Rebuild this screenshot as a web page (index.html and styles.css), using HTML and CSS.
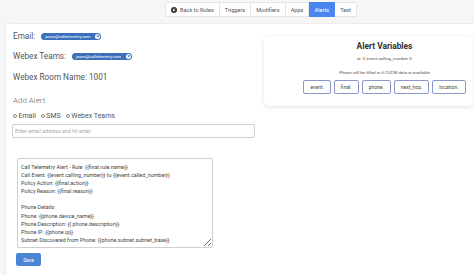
FILE: index.html
```html
<!DOCTYPE html>
<html>
<head>
<meta charset="utf-8">
<link rel="stylesheet" href="styles.css">
</head>
<body>
<nav class="tabs">
  <a class="tab first"><svg class="back-icon" viewBox="0 0 10 10"><circle cx="5" cy="5" r="5" fill="#333"/><path d="M5.6 2.6 L3.2 5 L5.6 7.4 M3.4 5 H7.2" stroke="#fff" stroke-width="1.5" fill="none"/></svg>Back to Rules</a>
  <a class="tab">Triggers</a>
  <a class="tab">Modifiers</a>
  <a class="tab">Apps</a>
  <a class="tab active">Alerts</a>
  <a class="tab last">Test</a>
</nav>
<main class="main">
  <section class="left">
    <div class="field">Email: <span class="badge">jason@calltelemetry.com<span class="badge-x">×</span></span></div>
    <div class="field f2">Webex Teams: <span class="badge">jason@calltelemetry.com<span class="badge-x">×</span></span></div>
    <div class="field f3">Webex Room Name: 1001</div>
    <h3 class="add-title">Add Alert</h3>
    <div class="radios">
      <label class="radio"><input type="radio" name="t">Email</label>
      <label class="radio"><input type="radio" name="t">SMS</label>
      <label class="radio"><input type="radio" name="t">Webex Teams</label>
    </div>
    <input class="email-input" type="text" placeholder="Enter email address and hit enter">
    <textarea class="message">Call Telemetry Alert - Rule: {{final.rule.name}}
Call Event: {{event.calling_number}} to {{event.called_number}}
Policy Action: {{final.action}}
Policy Reason: {{final.reason}}

Phone Details:
Phone: {{phone.device_name}}
Phone Description: {{ phone.description}}
Phone IP: {{phone.ip}}
Subnet Discovered from Phone: {{phone.subnet.subnet_base}}</textarea>
    <button class="save">Save</button>
  </section>
  <aside class="vars">
    <h2 class="vars-title">Alert Variables</h2>
    <p class="vars-note">ie: {{ event.calling_number }}</p>
    <p class="vars-note n2">Phone will be filled in if CUCM data is available</p>
    <div class="var-buttons">
      <button class="var">event.</button>
      <button class="var">final.</button>
      <button class="var">phone.</button>
      <button class="var">next_hop.</button>
      <button class="var">location.</button>
    </div>
  </aside>
</main>
</body>
</html>
```
FILE: styles.css
```css
html, body {
  margin: 0;
  padding: 0;
  height: 100%;
}
body {
  background: #f6f6f6;
  font-family: Roboto, "Liberation Sans", sans-serif;
  color: #444;
  overflow: hidden;
}
.tabs {
  display: flex;
  margin-left: 165px;
  padding-top: 2px;
  height: 23px;
  box-sizing: border-box;
}
.tab {
  display: flex;
  align-items: center;
  height: 15px;
  box-sizing: border-box;
  padding: 0 5px;
  background: #fff;
  border: 1px solid #e4e4e4;
  border-left: none;
  font-size: 5.6px;
  color: #555;
  white-space: nowrap;
}
.tab.first {
  border-left: 1px solid #e4e4e4;
  border-radius: 2px 0 0 2px;
  padding-left: 5px;
}
.tab.last { border-radius: 0 2px 2px 0; }
.tab.active {
  background: #4a86ee;
  border-color: #4a86ee;
  color: #fff;
}
.back-icon {
  width: 6px;
  height: 6px;
  margin-right: 3px;
  flex: none;
}
.main {
  display: flex;
  margin-left: 5px;
  background: #fff;
  border-left: 1px solid #ececec;
  border-top: 1px solid #ececec;
  border-top-left-radius: 4px;
  height: 260px;
  box-sizing: border-box;
}
.left {
  width: 258px;
  padding-left: 6px;
  padding-top: 6px;
  box-sizing: border-box;
}
.field {
  display: flex;
  align-items: center;
  height: 12px;
  font-size: 8.2px;
  color: #555;
  margin-left: 1px;
  white-space: pre;
}
.f2 { margin-top: 8px; }
.f3 { margin-top: 9px; }
.badge {
  display: inline-flex;
  align-items: center;
  justify-content: space-between;
  margin-left: 4px;
  height: 7px;
  width: 60px;
  box-sizing: border-box;
  padding: 0 1px 0 4px;
  border-radius: 4px;
  background: #3a70bb;
  color: #fff;
  font-size: 4px;
}
.badge-x {
  display: inline-flex;
  align-items: center;
  justify-content: center;
  width: 5px;
  height: 5px;
  border-radius: 50%;
  background: #fff;
  color: #3a70bb;
  font-size: 5px;
  font-weight: bold;
  line-height: 1;
}
.add-title {
  margin: 12px 0 0 1px;
  font-size: 8px;
  font-weight: 300;
  line-height: 12px;
  color: #666;
}
.radios {
  display: flex;
  gap: 5px;
  margin: 4px 0 0 1px;
  height: 9px;
  align-items: center;
  font-size: 7px;
  color: #555;
}
.radio {
  display: flex;
  align-items: center;
}
.radio input {
  appearance: none;
  -webkit-appearance: none;
  width: 4px;
  height: 4px;
  margin: 0 1.5px 0 0;
  border: 0.6px solid #888;
  border-radius: 50%;
  box-sizing: border-box;
}
.email-input {
  display: block;
  margin-top: 4px;
  width: 243px;
  height: 14px;
  box-sizing: border-box;
  border: 1px solid #cfcfcf;
  border-radius: 2px;
  padding: 0 2px;
  font-family: Roboto, "Liberation Sans", sans-serif;
  font-size: 5.2px;
  outline: none;
}
.email-input::placeholder { color: #aaa; }
.message {
  display: block;
  margin: 20px 0 0 5px;
  width: 196px;
  height: 90px;
  box-sizing: border-box;
  border: 1px solid #cfcfcf;
  border-radius: 2px;
  padding: 4px 3px;
  font-family: Roboto, "Liberation Sans", sans-serif;
  font-size: 5.4px;
  line-height: 8.1px;
  color: #444;
  overflow: hidden;
  resize: vertical;
}
.save {
  display: block;
  margin: 5px 0 0 4px;
  width: 25px;
  height: 13px;
  padding: 0;
  border: none;
  border-radius: 2px;
  background: #4a86d4;
  color: #fff;
  font-family: Roboto, "Liberation Sans", sans-serif;
  font-size: 5px;
}
.vars {
  flex: 1;
  margin: 12px 1px 0 0;
  height: 70px;
  box-sizing: border-box;
  padding: 4px 0 0 32px;
  background: #fff;
  border-radius: 5px;
  box-shadow: 0 1px 4px rgba(0,0,0,0.12);
  text-align: center;
}
.vars-title {
  margin: 0;
  font-size: 8.4px;
  line-height: 12px;
  font-weight: bold;
  color: #333;
}
.vars-note {
  margin: 4px 0 0;
  font-size: 4.4px;
  line-height: 6px;
  color: #555;
}
.vars-note.n2 { margin-top: 8px; }
.var-buttons {
  display: flex;
  justify-content: center;
  gap: 3px;
  margin-top: 4px;
}
.var {
  height: 14px;
  padding: 0 6px;
  background: #fff;
  border: 1px solid #8a97c7;
  border-radius: 2px;
  font-family: Roboto, "Liberation Sans", sans-serif;
  font-size: 5px;
  color: #444;
}
```
